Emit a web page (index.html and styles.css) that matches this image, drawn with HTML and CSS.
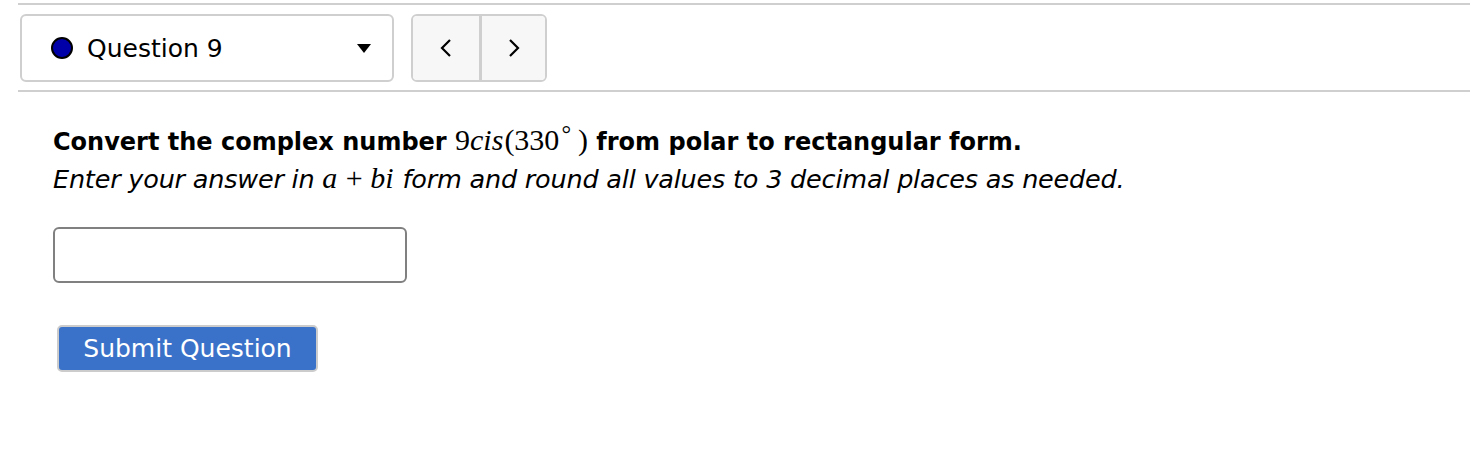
FILE: index.html
```html
<!DOCTYPE html>
<html lang="en">
<head>
    <meta charset="UTF-8">
    <title>Question 9</title>
    <link rel="stylesheet" href="styles.css">
</head>
<body>
    <div class="page">
        <hr class="rule rule-top">

        <div class="toolbar">
            <div class="question-select">
                <span class="status-dot"></span>
                <span class="select-label">Question 9</span>
                <span class="caret"></span>
            </div>
            <div class="nav-group">
                <button class="nav-btn" aria-label="Previous">
                    <svg width="14" height="20" viewBox="0 0 14 20"><path d="M11 2 L3 10 L11 18" fill="none" stroke="#000" stroke-width="2.2"/></svg>
                </button>
                <button class="nav-btn" aria-label="Next">
                    <svg width="14" height="20" viewBox="0 0 14 20"><path d="M3 2 L11 10 L3 18" fill="none" stroke="#000" stroke-width="2.2"/></svg>
                </button>
            </div>
        </div>

        <hr class="rule">

        <div class="question">
            <p class="prompt">Convert the complex number <span class="math">9<i>cis</i>(330<span class="deg">°</span>)</span> from polar to rectangular form.</p>
            <p class="hint">Enter your answer in <span class="math"><i>a</i> + <i>bi</i></span> form and round all values to 3 decimal places as needed.</p>

            <input type="text" class="answer-input">

            <div>
                <button class="submit-btn">Submit Question</button>
            </div>
        </div>
    </div>
</body>
</html>
```

FILE: styles.css
```css
body {
    margin: 0;
    background-color: #fff;
    font-family: 'DejaVu Sans', 'Noto Sans', sans-serif;
    color: #000;
}

.page {
    padding: 3px 0 0 20px;
}

.rule {
    border: none;
    border-top: 2px solid #cfcfcf;
    margin: 0 -2px 0 -2px;
}

.toolbar {
    display: flex;
    gap: 17px;
    margin: 9px 0 8px 0;
}

.question-select {
    width: 374px;
    height: 68px;
    box-sizing: border-box;
    border: 2px solid #cfcfcf;
    border-radius: 6px;
    display: flex;
    align-items: center;
    padding: 0 0 0 29px;
}

.status-dot {
    width: 18px;
    height: 18px;
    border-radius: 50%;
    background-color: #0000a8;
    border: 2px solid #000;
    margin-right: 14px;
}

.select-label {
    font-size: 25px;
    flex: 1;
}

.caret {
    width: 0;
    height: 0;
    border-left: 7px solid transparent;
    border-right: 7px solid transparent;
    border-top: 9px solid #000;
    margin-right: 21px;
}

.nav-group {
    display: flex;
    border: 2px solid #cfcfcf;
    border-radius: 6px;
    overflow: hidden;
    height: 68px;
    box-sizing: border-box;
}

.nav-btn {
    width: 66px;
    background-color: #f7f7f7;
    border: none;
    padding: 0;
    display: flex;
    align-items: center;
    justify-content: center;
    cursor: pointer;
}

.nav-btn + .nav-btn {
    border-left: 3px solid #cfcfcf;
}

.question {
    padding: 24px 0 0 33px;
}

.prompt {
    font-size: 24px;
    font-weight: bold;
    margin: 0;
    line-height: 37px;
}

.hint {
    font-size: 25.5px;
    font-style: italic;
    margin: 0;
    line-height: 34px;
    letter-spacing: -0.2px;
}

.math {
    font-family: 'Liberation Serif', 'DejaVu Serif', serif;
    font-weight: normal;
    font-style: normal;
    font-size: 30px;
    letter-spacing: 0;
}

.math i {
    font-style: italic;
    padding-right: 1px;
}

.deg {
    font-size: 24px;
    vertical-align: 8px;
    padding: 0 7px 0 2px;
}

.answer-input {
    display: block;
    margin-top: 31px;
    width: 354px;
    height: 56px;
    box-sizing: border-box;
    border: 2px solid #808080;
    border-radius: 6px;
    font-size: 20px;
}

.submit-btn {
    margin: 42px 0 0 4px;
    width: 261px;
    height: 47px;
    background-color: #3a72c9;
    color: #fff;
    border: 2px solid #cccccc;
    border-radius: 5px;
    font-family: 'DejaVu Sans', 'Noto Sans', sans-serif;
    font-size: 25px;
}
```
